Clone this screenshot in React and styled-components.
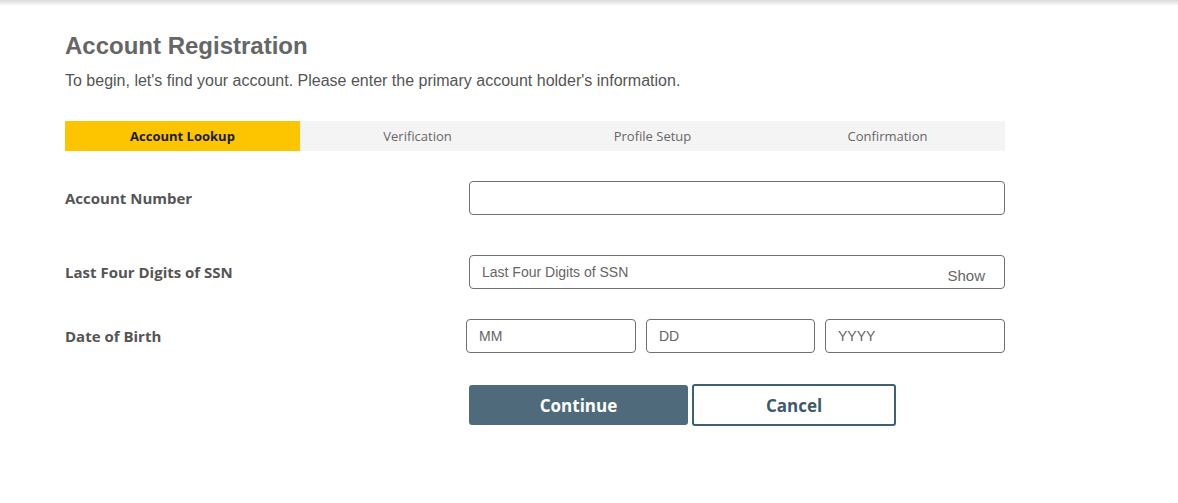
import styled, { createGlobalStyle } from "styled-components";

const Global = createGlobalStyle`
  body {
    margin: 0;
    background: #fff;
    font-family: "Liberation Sans", Arial, sans-serif;
  }
`;

const TopShadow = styled.div`
  height: 6px;
  background: linear-gradient(#d9d9d9, #ffffff);
`;

const Page = styled.div`
  padding: 26px 0 60px 65px;
  width: 940px;
`;

const Title = styled.h1`
  margin: 0;
  font-size: 24px;
  font-weight: 700;
  color: #666;
  line-height: 28px;
`;

const Lead = styled.p`
  margin: 11px 0 0;
  font-size: 16px;
  color: #555;
  line-height: 20px;
`;

const Steps = styled.div`
  margin-top: 30px;
  display: grid;
  grid-template-columns: repeat(4, 1fr);
  height: 30px;
  background: #f4f4f4;
`;

const Step = styled.div`
  display: flex;
  align-items: center;
  justify-content: center;
  font-family: "Open Sans", Lato, sans-serif;
  font-size: 13px;
  font-weight: ${(p) => (p.$active ? 700 : 400)};
  color: ${(p) => (p.$active ? "#1a1a1a" : "#666")};
  background: ${(p) => (p.$active ? "#fdc400" : "transparent")};
`;

const Form = styled.div`
  margin-top: 30px;
  display: grid;
  grid-template-columns: 404px 536px;
  row-gap: 40px;
  align-items: center;
`;

const Label = styled.div`
  font-family: "Open Sans", Lato, sans-serif;
  font-size: 15px;
  font-weight: 700;
  color: #555;
  margin-top: ${(p) => p.$offset || 0}px;
`;

const Field = styled.div`
  position: relative;
  margin-top: ${(p) => p.$offset || 0}px;
`;

const Input = styled.input`
  box-sizing: border-box;
  width: ${(p) => (p.$w ? `${p.$w}px` : "100%")};
  flex: ${(p) => (p.$w ? "none" : "1")};
  height: 34px;
  border: 1px solid #707070;
  border-radius: 4px;
  padding: 0 12px;
  font-family: "Liberation Sans", Arial, sans-serif;
  font-size: 14px;
  color: #333;
  outline: none;
  &::placeholder {
    color: #666;
  }
`;

const Toggle = styled.span`
  position: absolute;
  right: 20px;
  top: 12px;
  font-size: 15px;
  color: #666;
`;

const DateRow = styled.div`
  display: flex;
  gap: 10px;
  margin-left: -3px;
`;

const Actions = styled.div`
  grid-column: 2;
  display: flex;
  align-items: center;
  gap: 4px;
  margin-top: -9px;
`;

const Button = styled.button`
  box-sizing: border-box;
  width: ${(p) => (p.$primary ? 219 : 204)}px;
  height: ${(p) => (p.$primary ? 40 : 42)}px;
  border-radius: 3px;
  border: 2px solid ${(p) => (p.$primary ? "#4f6b7b" : "#3f5f72")};
  background: ${(p) => (p.$primary ? "#4f6b7b" : "#fff")};
  color: ${(p) => (p.$primary ? "#fff" : "#3d5a6c")};
  font-family: "Open Sans", Lato, sans-serif;
  font-size: 17px;
  font-weight: 700;
  cursor: pointer;
`;

export default function App() {
  return (
    <>
      <Global />
      <TopShadow />
      <Page>
        <Title>Account Registration</Title>
        <Lead>
          To begin, let's find your account. Please enter the primary account
          holder's information.
        </Lead>
        <Steps>
          <Step $active>Account Lookup</Step>
          <Step>Verification</Step>
          <Step>Profile Setup</Step>
          <Step>Confirmation</Step>
        </Steps>
        <Form>
          <Label>Account Number</Label>
          <Field>
            <Input type="text" />
          </Field>

          <Label>Last Four Digits of SSN</Label>
          <Field>
            <Input type="password" placeholder="Last Four Digits of SSN" />
            <Toggle>Show</Toggle>
          </Field>

          <Label $offset={-10}>Date of Birth</Label>
          <Field $offset={-10}>
            <DateRow>
              <Input $w={170} placeholder="MM" />
              <Input $w={169} placeholder="DD" />
              <Input placeholder="YYYY" />
            </DateRow>
          </Field>

          <Actions>
            <Button $primary>Continue</Button>
            <Button>Cancel</Button>
          </Actions>
        </Form>
      </Page>
    </>
  );
}
